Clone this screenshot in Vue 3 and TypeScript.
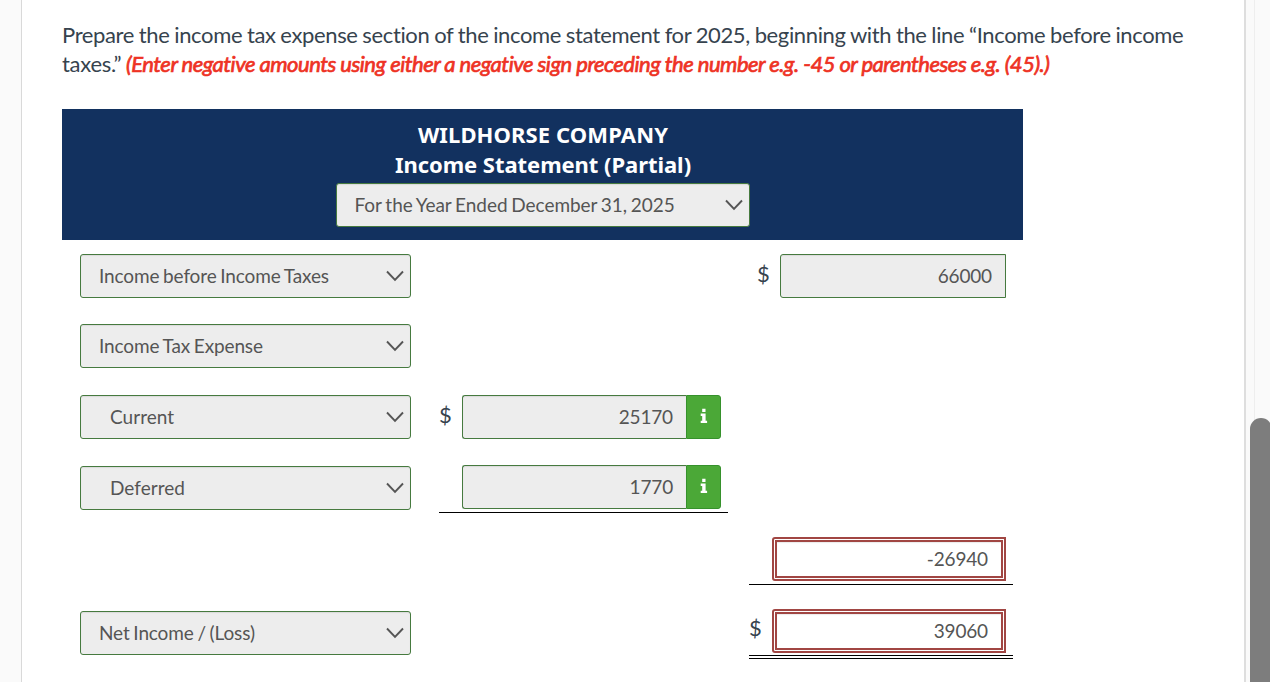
<script setup lang="ts">
interface Amount {
  value: string
  dollar?: boolean
  hint?: boolean
  wrong?: boolean
  rule?: 'single' | 'double'
}
interface Row {
  key: string
  label?: string
  indent?: boolean
  first?: Amount
  second?: Amount
}
const rows: Row[] = [
  { key: 'before', label: 'Income before Income Taxes', second: { value: '66000', dollar: true } },
  { key: 'expense', label: 'Income Tax Expense' },
  { key: 'current', label: 'Current', indent: true, first: { value: '25170', dollar: true, hint: true } },
  { key: 'deferred', label: 'Deferred', indent: true, first: { value: '1770', hint: true, rule: 'single' } },
  { key: 'total', second: { value: '-26940', wrong: true, rule: 'single' } },
  { key: 'net', label: 'Net Income / (Loss)', second: { value: '39060', dollar: true, wrong: true, rule: 'double' } },
]
</script>

<template>
  <div class="page">
    <main class="sheet">
      <p class="prompt">
        <span class="lead">Prepare the income tax expense section of the income statement for 2025, beginning with the line “Income before income</span><br>
        <span class="tail">taxes.”</span> <em>(Enter negative amounts using either a negative sign preceding the number e.g. -45 or parentheses e.g. (45).)</em>
      </p>
      <section class="statement">
        <header class="head">
          <div class="company">WILDHORSE COMPANY</div>
          <div class="title">Income Statement (Partial)</div>
          <div class="select period">
            <span>For the Year Ended December 31, 2025</span>
            <svg class="chevron" viewBox="0 0 18 12"><path d="M1 1.5 L9 9.8 L17 1.5" /></svg>
          </div>
        </header>
        <div v-for="r in rows" :key="r.key" class="row" :class="'row-' + r.key">
          <div class="label">
            <div v-if="r.label" class="select" :class="{ indent: r.indent }">
              <span>{{ r.label }}</span>
              <svg class="chevron" viewBox="0 0 18 12"><path d="M1 1.5 L9 9.8 L17 1.5" /></svg>
            </div>
          </div>
          <div class="amount first" :class="r.first?.rule">
            <div v-if="r.first" class="entry">
              <span class="dollar">{{ r.first.dollar ? '$' : '' }}</span>
              <div class="field">{{ r.first.value }}</div>
              <div class="hint">
                <svg viewBox="0 0 8 16"><path d="M2.2 0.8h3.3v3.2H2.2z M0.7 5.6h4.9v7.2h1.5v2.3H0.7v-2.3h1.5V7.9H0.7z" /></svg>
              </div>
            </div>
          </div>
          <div class="amount second" :class="r.second?.rule">
            <div v-if="r.second" class="entry">
              <span class="dollar">{{ r.second.dollar ? '$' : '' }}</span>
              <div class="field" :class="{ wrong: r.second.wrong }">{{ r.second.value }}</div>
            </div>
          </div>
        </div>
      </section>
    </main>
    <aside class="gutter"><div class="track"></div><div class="thumb"></div></aside>
  </div>
</template>

<style>
body { margin: 0; overflow: hidden; }
</style>
<style scoped>
* { box-sizing: border-box; }
.page {
  display: flex;
  height: 682px;
  padding-left: 21px;
  background: #fafafa;
  overflow: hidden;
  font-family: Lato, "Liberation Sans", sans-serif;
  font-variant-ligatures: none;
  color: #36434e;
}
.sheet {
  width: 1225px;
  flex: none;
  background: #fff;
  border-left: 1px solid #d9d9d9;
  border-right: 2px solid #dedede;
  padding: 20px 0 0 40px;
}
.prompt { margin: 0; height: 89px; font-size: 22px; line-height: 29px; white-space: nowrap; word-spacing: -0.5px; letter-spacing: -0.365px; }
em { color: #ee3224; font-style: italic; font-weight: 400; word-spacing: -0.2px; letter-spacing: -0.485px; -webkit-text-stroke: 0.7px #ee3224; }
.tail { letter-spacing: -0.3px; }
.statement { width: 961px; }
.head {
  height: 131px;
  background: #12315f;
  padding-top: 10px;
  display: flex;
  flex-direction: column;
  align-items: center;
  color: #fff;
  font: 700 22px/30px "Noto Sans", sans-serif;
}
.company { letter-spacing: 0.1px; padding-left: 1px; }
.title { letter-spacing: -0.05px; padding-left: 1px; }
.select {
  width: 331px;
  height: 44px;
  border: 1px solid #467a3f;
  border-radius: 3px;
  background: #ededed;
  box-shadow: inset 0 1px 1px rgba(0, 0, 0, 0.08);
  padding: 0 6px 0 18px;
  display: flex;
  align-items: center;
  justify-content: space-between;
  font: 400 19px/42px Lato, sans-serif;
  font-variant-ligatures: none;
  word-spacing: -1px;
  letter-spacing: -0.13px;
  color: #555;
  white-space: nowrap;
}
.period { width: 414px; margin-top: 4px; letter-spacing: -0.05px; }
.indent { padding-left: 29px; letter-spacing: 0.03px; }
.chevron { width: 18px; height: 12px; fill: none; stroke: #555; stroke-width: 1.9; }
.row {
  display: grid;
  grid-template-columns: 331px 289px 264px;
  padding-left: 18px;
  height: 71px;
  align-items: start;
}
.label { padding-top: 14px; }
.first { margin-left: 28px; padding-top: 14px; width: 289px; }
.second { margin-left: 49px; padding-top: 14px; width: 264px; }
.entry { display: flex; justify-content: flex-end; padding-right: 7px; }
.dollar { flex: 1; padding-left: 8px; font-size: 22px; line-height: 39px; }
.first .dollar, .row-net .dollar { padding-left: 0; }
.row-net .dollar { line-height: 37px; }
.field {
  height: 44px;
  width: 226px;
  border: 1px solid #467a3f;
  border-radius: 3px 0 0 3px;
  background: #ededed;
  box-shadow: inset 0 1px 1px rgba(0, 0, 0, 0.08);
  padding-right: 13px;
  font-size: 19px;
  letter-spacing: -0.15px;
  line-height: 42px;
  text-align: right;
  color: #555;
}
.first .field { width: 224px; border-right: 0; }
.field.wrong {
  width: 234px;
  border: 5px double #a14643;
  background: #fff;
  line-height: 33px;
}
.hint {
  width: 35px;
  height: 44px;
  background: #4ba837;
  border: 1px solid #36912c;
  border-radius: 0 3px 3px 0;
  display: flex;
  align-items: center;
  justify-content: center;
}
.hint svg { width: 8px; height: 16px; margin-bottom: 2px; fill: #fff; }
.single, .double { padding-bottom: 3px; border-bottom: 1px solid #000; }
.double::after { content: ""; display: block; height: 2px; margin-top: 2px; border-top: 1px solid #000; }
.row-before { height: 70px; }
.row-deferred .first { padding-top: 13px; }
.row-total { height: 72px; }
.row-net .label { padding-top: 16px; }
.row-net .second { padding-bottom: 0; }
.gutter { position: relative; flex: 1; overflow: hidden; }
.track { height: 682px; margin-left: 8px; border-left: 1px solid #eee; }
.thumb {
  position: absolute;
  left: 4px;
  top: 418px;
  width: 22px;
  height: 400px;
  border-radius: 11px;
  background: #7d7d7d;
}
</style>
